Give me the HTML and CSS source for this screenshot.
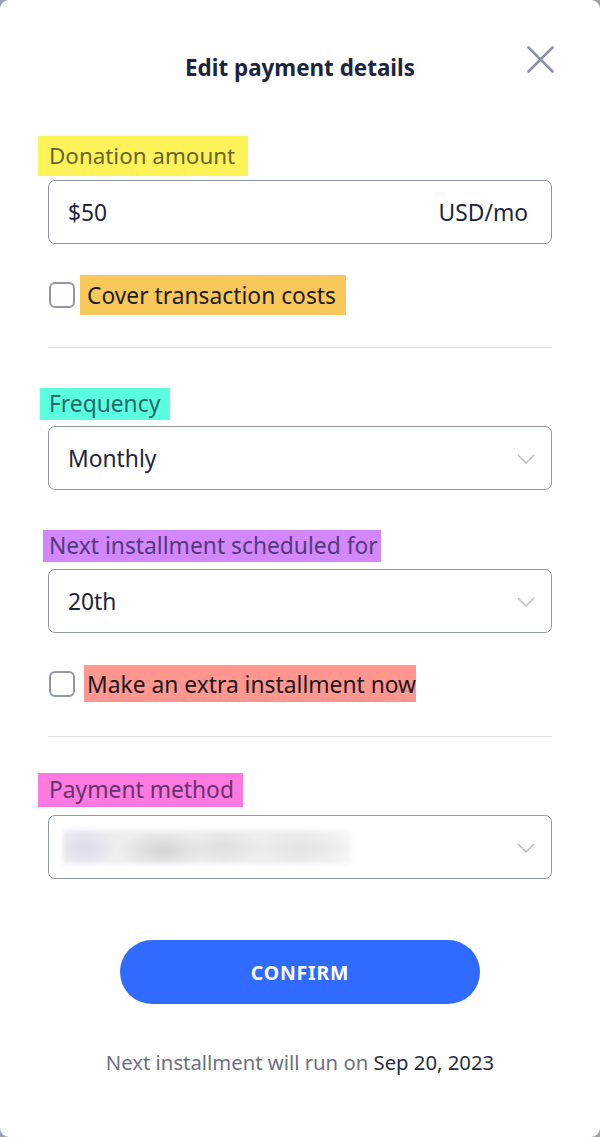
FILE: index.html
```html
<!DOCTYPE html>
<html lang="en">
<head>
<meta charset="utf-8">
<title>Edit payment details</title>
<link rel="stylesheet" href="styles.css">
</head>
<body>
<div class="modal">
  <header class="modal-header">
    <h1 class="modal-title">Edit payment details</h1>
    <button class="close-btn" aria-label="Close">
      <svg width="27" height="27" viewBox="0 0 27 27"><path d="M1.5 1.5 L25.5 25.5 M25.5 1.5 L1.5 25.5" stroke="#8b93a6" stroke-width="2.6" stroke-linecap="round" fill="none"/></svg>
    </button>
  </header>

  <form class="form">
    <div class="field field-amount">
      <label class="label"><span class="hl hl-yellow">Donation amount</span></label>
      <div class="input">
        <span class="input-value">$50</span>
        <span class="input-suffix">USD/mo</span>
      </div>
    </div>

    <div class="check-row check-row-1">
      <span class="checkbox"></span>
      <span class="hl hl-orange">Cover transaction costs</span>
    </div>

    <hr class="divider divider-1">

    <div class="field field-frequency">
      <label class="label"><span class="hl hl-cyan">Frequency</span></label>
      <div class="input select">
        <span class="input-value">Monthly</span>
        <svg class="chevron" width="18" height="10" viewBox="0 0 18 10"><path d="M1 1 L9 9 L17 1" stroke="#b9bdc7" stroke-width="1.5" fill="none"/></svg>
      </div>
    </div>

    <div class="field field-next">
      <label class="label"><span class="hl hl-purple">Next installment scheduled for</span></label>
      <div class="input select">
        <span class="input-value">20th</span>
        <svg class="chevron" width="18" height="10" viewBox="0 0 18 10"><path d="M1 1 L9 9 L17 1" stroke="#b9bdc7" stroke-width="1.5" fill="none"/></svg>
      </div>
    </div>

    <div class="check-row check-row-2">
      <span class="checkbox"></span>
      <span class="hl hl-salmon">Make an extra installment now</span>
    </div>

    <hr class="divider divider-2">

    <div class="field field-payment">
      <label class="label"><span class="hl hl-pink">Payment method</span></label>
      <div class="input select">
        <span class="blurred"></span>
        <svg class="chevron" width="18" height="10" viewBox="0 0 18 10"><path d="M1 1 L9 9 L17 1" stroke="#b9bdc7" stroke-width="1.5" fill="none"/></svg>
      </div>
    </div>

    <div class="actions">
      <button type="button" class="confirm-btn">CONFIRM</button>
    </div>

    <p class="footnote">Next installment will run on <span class="footnote-date">Sep 20, 2023</span></p>
  </form>
</div>
</body>
</html>
```

FILE: styles.css
```css
* { box-sizing: border-box; }

html, body {
  margin: 0;
  padding: 0;
  height: 100%;
}

body {
  background: #9aa3b5;
  font-family: "Noto Sans", "Open Sans", sans-serif;
  color: #1b2540;
}

.modal {
  background: #ffffff;
  width: 600px;
  height: 1137px;
  border-radius: 9px;
  padding-top: 46px;
}

.modal-header {
  position: relative;
  height: 42px;
  display: flex;
  justify-content: center;
  align-items: center;
}

.modal-title {
  margin: 0;
  font-size: 22.4px;
  font-weight: 700;
  color: #1b2540;
}

.close-btn {
  position: absolute;
  right: 46px;
  top: 0;
  width: 27px;
  height: 27px;
  padding: 0;
  border: 0;
  background: none;
  display: flex;
}

.form {
  padding: 0 48px;
  display: flex;
  flex-direction: column;
}

.field { display: flex; flex-direction: column; }

.label {
  display: flex;
  line-height: 1;
}

.hl {
  display: inline-flex;
  align-items: center;
  font-size: 22.8px;
  white-space: nowrap;
  padding-top: 1px;
}

.hl-yellow {
  background: #fff35a;
  color: #66662d;
  margin-left: -10px;
  padding-left: 11px;
  width: 210px;
  height: 40px;
  font-size: 22.4px;
}

.hl-cyan {
  background: #5affdf;
  color: #236b69;
  margin-left: -8px;
  padding-left: 9px;
  width: 130px;
  height: 32px;
}

.hl-purple {
  background: #d387fd;
  color: #53397a;
  margin-left: -5px;
  padding-left: 6px;
  width: 338px;
  height: 32px;
}

.hl-pink {
  background: #ff7ae0;
  color: #64336b;
  margin-left: -10px;
  padding-left: 11px;
  width: 205px;
  height: 34px;
}

.hl-orange {
  background: #f9c85b;
  color: #1f1c14;
  padding-left: 7px;
  width: 266px;
  height: 40px;
  margin-left: 5px;
}

.hl-salmon {
  background: #ff9690;
  color: #22171c;
  padding-left: 3px;
  width: 332px;
  height: 37px;
  margin-left: 9px;
}

.field-amount { margin-top: 48px; }
.field-amount .input { margin-top: 4px; }

.input {
  height: 64px;
  border: 1px solid #8f97a8;
  border-radius: 7px;
  display: flex;
  align-items: center;
  justify-content: space-between;
  padding: 0 23px 0 19px;
  font-size: 22.8px;
  color: #1b2540;
}

.select { padding-right: 16px; }

.chevron { display: block; margin-top: 1px; }

.check-row {
  display: flex;
  align-items: center;
  padding-left: 1px;
}

.check-row-1 { margin-top: 31px; }
.check-row-2 { margin-top: 32px; }

.checkbox {
  width: 26px;
  height: 26px;
  border: 2px solid #8f97a8;
  border-radius: 6px;
  flex: none;
}

.divider {
  border: 0;
  height: 1px;
  background: #e1e3e7;
  margin: 0;
  width: 100%;
}

.divider-1 { margin-top: 32px; }
.divider-2 { margin-top: 34px; }

.field-frequency { margin-top: 40px; }
.field-frequency .input { margin-top: 6px; }

.field-next { margin-top: 40px; }
.field-next .input { margin-top: 7px; }

.field-payment { margin-top: 36px; }
.field-payment .input { margin-top: 8px; padding-left: 14px; }

.blurred {
  width: 288px;
  height: 34px;
  background:
    radial-gradient(ellipse 30px 20px at 22px 17px, #d9dbe8 0%, rgba(217,219,232,0) 100%),
    radial-gradient(ellipse 45px 20px at 100px 20px, #d3d4d9 0%, rgba(211,212,217,0) 100%),
    radial-gradient(ellipse 40px 18px at 160px 17px, #dcdde2 0%, rgba(220,221,226,0) 100%),
    radial-gradient(ellipse 50px 18px at 240px 18px, #e2e3e6 0%, rgba(226,227,230,0) 100%),
    linear-gradient(90deg, #ecedf2 0%, #eeeff2 40%, #eceef1 80%, #f6f6f8 100%);
  filter: blur(2px);
}

.actions {
  display: flex;
  justify-content: center;
  margin-top: 61px;
}

.confirm-btn {
  width: 360px;
  height: 64px;
  border: 0;
  border-radius: 32px;
  background: #2f6bff;
  color: #ffffff;
  font-family: "Noto Sans", "Open Sans", sans-serif;
  font-size: 19.5px;
  font-weight: 700;
  letter-spacing: 0.8px;
}

.footnote {
  margin: 45px 0 0;
  text-align: center;
  font-size: 20.3px;
  color: #6b7180;
  line-height: 26px;
}

.footnote-date { color: #252c3d; }
```
